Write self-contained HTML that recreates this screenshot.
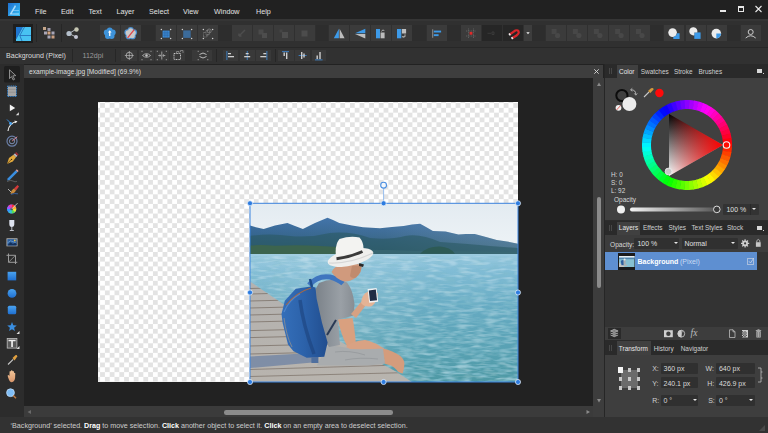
<!DOCTYPE html>
<html><head><meta charset="utf-8">
<style>
*{margin:0;padding:0;box-sizing:border-box}
html,body{width:768px;height:433px;overflow:hidden;background:#222;font-family:"Liberation Sans",sans-serif;color:#ddd}
.a{position:absolute}
.t{position:absolute;white-space:nowrap;font-size:7px;line-height:9px}
.btn{position:absolute;top:25px;height:16px;width:20px;background:#3b3b3b}
.cb{position:absolute;top:50px;height:11px;width:16px;background:#3a3a3a}
.tool{position:absolute;left:4px;width:16px;height:16px}
svg{position:absolute;overflow:visible}
</style></head><body>
<!-- menu bar -->
<div class="a" style="left:0;top:0;width:768px;height:19px;background:#212121"></div>
<!-- toolbar -->
<div class="a" style="left:0;top:19px;width:768px;height:28px;background:#303030;border-top:2px solid #353535"></div>
<!-- context bar -->
<div class="a" style="left:0;top:47px;width:768px;height:17px;background:#313131;border-top:1px solid #272727"></div>
<!-- left tools -->
<div class="a" style="left:0;top:64px;width:24px;height:353px;background:#2c2c2c"></div>
<!-- doc tab -->
<div class="a" style="left:24px;top:65px;width:579px;height:13px;background:#3e3e3e"></div>
<!-- canvas -->
<div class="a" style="left:24px;top:78px;width:569px;height:328px;background:#222"></div>

<!-- document -->
<div class="a" style="left:98px;top:101.5px;width:420px;height:280.5px;background-color:#fff;background-image:conic-gradient(#fff 25%,#e3e3e3 0 50%,#fff 0 75%,#e3e3e3 0);background-size:9.61px 9.61px;background-position:2.1px 1.05px"></div>
<svg style="left:250px;top:203px" width="268" height="179" viewBox="250 203 268 179">
<defs>
<linearGradient id="sky" x1="0" y1="203" x2="0" y2="250" gradientUnits="userSpaceOnUse"><stop offset="0" stop-color="#e3ebf1"/><stop offset="1" stop-color="#eef3f6"/></linearGradient>
<linearGradient id="mtn" x1="0" y1="217" x2="0" y2="254" gradientUnits="userSpaceOnUse"><stop offset="0" stop-color="#3f72a9"/><stop offset="0.4" stop-color="#386894"/><stop offset="1" stop-color="#2c5a6e"/></linearGradient>
<linearGradient id="mtn2" x1="250" y1="0" x2="518" y2="0" gradientUnits="userSpaceOnUse"><stop offset="0" stop-color="#fff" stop-opacity="0"/><stop offset="0.5" stop-color="#fff" stop-opacity="0.04"/><stop offset="1" stop-color="#c8ddf0" stop-opacity="0.22"/></linearGradient>
<linearGradient id="water" x1="0" y1="254" x2="0" y2="382" gradientUnits="userSpaceOnUse"><stop offset="0" stop-color="#9ccbe0"/><stop offset="0.12" stop-color="#82bdd6"/><stop offset="0.4" stop-color="#67abc3"/><stop offset="0.75" stop-color="#58a1b3"/><stop offset="1" stop-color="#4e99a4"/></linearGradient>
<radialGradient id="glare" cx="330" cy="300" r="110" gradientUnits="userSpaceOnUse"><stop offset="0" stop-color="#fff" stop-opacity="0.15"/><stop offset="1" stop-color="#fff" stop-opacity="0"/></radialGradient>
<linearGradient id="dock" x1="0" y1="281" x2="0" y2="382" gradientUnits="userSpaceOnUse"><stop offset="0" stop-color="#b4b2b0"/><stop offset="1" stop-color="#b8b4ae"/></linearGradient>
<linearGradient id="pack" x1="280" y1="0" x2="328" y2="0" gradientUnits="userSpaceOnUse"><stop offset="0" stop-color="#3570bb"/><stop offset="0.5" stop-color="#2c62aa"/><stop offset="1" stop-color="#214d8e"/></linearGradient>
<linearGradient id="shirt" x1="318" y1="0" x2="356" y2="0" gradientUnits="userSpaceOnUse"><stop offset="0" stop-color="#7e858c"/><stop offset="0.6" stop-color="#9aa0a6"/><stop offset="1" stop-color="#858b91"/></linearGradient>
<linearGradient id="skin2" x1="0" y1="0" x2="1" y2="0"><stop offset="0" stop-color="#c98a68"/><stop offset="1" stop-color="#e2b296"/></linearGradient>
</defs>
<rect x="250" y="203" width="268" height="179" fill="url(#sky)"/>
<polygon points="250,225.5 257,227.5 263.7,229.1 275,225.5 287.4,223.1 295,226 302.9,229.1 315,223 327.5,217.7 333,220 339.3,223.1 352,225.5 363,227.3 380,228.2 392,227 403.7,226 412,224.5 420.1,223.7 426,227 432.9,231 445.6,231.5 458.4,234.6 466,234 474.8,234 486,237 496.7,240 507,241.5 518,243.7 518,255 250,255" fill="url(#mtn)"/>
<polygon points="250,225.5 257,227.5 263.7,229.1 275,225.5 287.4,223.1 295,226 302.9,229.1 315,223 327.5,217.7 333,220 339.3,223.1 352,225.5 363,227.3 380,228.2 392,227 403.7,226 412,224.5 420.1,223.7 426,227 432.9,231 445.6,231.5 458.4,234.6 466,234 474.8,234 486,237 496.7,240 507,241.5 518,243.7 518,255 250,255" fill="url(#mtn2)"/>
<path d="M250 236 Q270 233 290 236 Q310 238 330 233 Q350 231 370 238 Q390 240 405 236 Q420 233 440 242 Q470 244 490 246 L518 248 V255 H250 Z" fill="#2a5862" opacity="0.6"/>
<path d="M250 245.5 Q262 244.5 275 245.8 Q300 244.8 320 246 L338 247 L340 254 H250 Z" fill="#3c644e"/>
<path d="M338 249.5 Q380 249 420 251 Q470 251 518 251.5 V254 H338 Z" fill="#3a6873" opacity="0.8"/>
<path d="M420 253.7 Q428 246 440 246.5 Q450 247 455 253.7 Z" fill="#2d5a55"/>
<filter id="wv" x="0" y="0" width="1" height="1"><feTurbulence type="fractalNoise" baseFrequency="0.07 0.32" numOctaves="2" seed="3"/><feColorMatrix values="0 0 0 0 0.22  0 0 0 0 0.5  0 0 0 0 0.6  0 0 0 3.6 -1.55"/></filter>
<filter id="wv2" x="0" y="0" width="1" height="1"><feTurbulence type="fractalNoise" baseFrequency="0.07 0.32" numOctaves="2" seed="9"/><feColorMatrix values="0 0 0 0 0.9  0 0 0 0 0.96  0 0 0 0 1  0 0 0 -3.2 1.75"/></filter>
<rect x="250" y="254" width="268" height="128" fill="url(#water)"/>
<rect x="250" y="254" width="268" height="128" fill="url(#glare)"/>
<linearGradient id="wmg" x1="0" y1="254" x2="0" y2="382" gradientUnits="userSpaceOnUse"><stop offset="0" stop-color="#fff" stop-opacity="0.35"/><stop offset="0.5" stop-color="#fff" stop-opacity="0.8"/><stop offset="1" stop-color="#fff" stop-opacity="1"/></linearGradient><mask id="wm"><rect x="250" y="254" width="268" height="128" fill="url(#wmg)"/></mask><rect x="250" y="256" width="268" height="126" filter="url(#wv)" opacity="0.85" mask="url(#wm)"/><rect x="250" y="256" width="268" height="126" filter="url(#wv2)" opacity="0.28"/>
<polygon points="250,281.5 281.7,303 330,336 395,371 412,382 250,382" fill="url(#dock)"/>
<clipPath id="dockclip"><polygon points="250,281.5 281.7,303 330,336 395,371 412,382 250,382"/></clipPath><g clip-path="url(#dockclip)"><path d="M250 288.5 L330 286.5 M250 294.0 L330 292.0 M250 301.0 L330 299.0 M250 308.0 L330 306.0 M250 315.0 L330 313.0 M250 322.0 L330 320.0 M250 330.6 L330 328.6 M250 337.6 L330 335.6 M250 346.0 L330 344.0 M250 354.0 L330 352.0 " stroke="#7a6f66" stroke-width="1" opacity="0.75"/><path d="M250 369.5 L400 365 M250 376.5 L410 372.5" stroke="#7a6f66" stroke-width="1" opacity="0.7"/></g>
<polygon points="250,356.5 312,353 318,362 250,368" fill="#7587a4" opacity="0.85"/>
<!-- shorts -->
<polygon points="329,345 347,347.8 384,347.8 385,363.7 368,365.5 316.7,365.5 322,356" fill="#a9acae"/>
<path d="M335 352 Q350 350 365 355 M345 360 Q360 357 378 359" stroke="#8c9093" stroke-width="0.8" fill="none" opacity="0.7"/>
<!-- leg -->
<path d="M383 348.6 Q393 351 400 355.7 Q405 360 404.4 364.6 Q404 370 402.6 373.4 Q400 373 398.2 371.7 Q394 367 391 365.5 L385 363.7 Z" fill="#d49c7c"/>
<!-- shirt -->
<path d="M314 292 L319 283 Q333 277 347 282.5 Q353 290 354.5 304 L353.4 315.4 L338 319.7 L340 345 L329 347 L321 335 L316 305 Z" fill="url(#shirt)"/>
<!-- strap dark -->
<path d="M336 320 L327 335" stroke="#2a3a55" stroke-width="2" />
<!-- upper arm -->
<path d="M338 319.5 L352.5 318 Q355 330 356 346 Q351 349 347 346 Q341 335 338 319.5 Z" fill="#d9a07f"/>
<!-- forearm on thigh -->
<path d="M346 347 Q352 341 365 340 Q374 342 379 345.5 L384 348.5 Q366 349.5 350 349 Z" fill="#d9a283"/>
<!-- phone arm -->
<path d="M351 314 L361 302 L366 305 L356 318 Z" fill="#d6a183"/>
<path d="M361 303 Q362 294 368 291.5 L378 293 Q377 302 372 306 Q365 308 361 303 Z" fill="#e4b395"/>
<polygon points="367.6,289 376.6,288 378.2,301.8 369.2,302.8" fill="#f1f3f5"/>
<polygon points="368.8,290.5 375.8,289.6 377,300.2 370,301.1" fill="#1f2c44"/>
<!-- backpack -->
<path d="M311 286.5 L315.5 287.5 L316.6 298.5 L322 322.7 L327.6 342.4 L324.3 356.7 L306.7 357.8 L293.5 351.2 L288 344.6 L282.6 322.7 L281.5 313.9 L284.8 300.7 L295.75 288.65 Z" fill="url(#pack)"/>
<path d="M309 285 Q318 275 330 277 Q338 279 343 283.5" stroke="#3f75bf" stroke-width="5" fill="none"/>
<path d="M310 279 L312 287" stroke="#1d4a88" stroke-width="2.5"/>
<path d="M286 305 Q297 292 311 288" stroke="#a46848" stroke-width="1.1" fill="none"/>
<path d="M284 318 Q286 335 292 347" stroke="#8f8f8f" stroke-width="0.8" fill="none"/>
<path d="M300 300 Q303 325 314 354" stroke="#1b3f78" stroke-width="3.5" fill="none" opacity="0.55"/>
<path d="M284 312 Q289 300 300 294" stroke="#6c9fe0" stroke-width="1.2" fill="none" opacity="0.5"/>
<rect x="311.4" y="357" width="7" height="6" fill="#4f6f9e"/>
<!-- neck/head -->
<path d="M331.5 272 Q335 265 345 263 L361.5 264.5 Q362.5 272 356 277.5 Q350 282 344 281.5 Q336 279 331.5 272 Z" fill="#d09a7d"/><path d="M352 266 Q361 265 361.5 267 Q361 273 356 277.5 Q352 279 350 276 Z" fill="#b98468" opacity="0.7"/>
<path d="M359 263 L364 264.5 L363 267 L359 266 Z" fill="#2a2a2a"/>
<!-- hat -->
<ellipse cx="350.5" cy="257.5" rx="23.3" ry="8" transform="rotate(-13 350.5 257.5)" fill="#efefed"/>
<path d="M336 256.5 Q334.5 245 339.5 239 Q350 235.5 359.5 237.5 Q364.5 243 363.3 251.5 Z" fill="#f3f3f1"/>
<path d="M336.5 258.8 Q350 257 362.5 251.5" stroke="#3a3a3a" stroke-width="3" fill="none"/>
<path d="M329 263 Q350 264 373 253" stroke="#d0d0d0" stroke-width="1.1" fill="none" opacity="0.8"/>
</svg>
<!-- selection -->
<svg style="left:0;top:0" width="768" height="433" viewBox="0 0 768 433">
<rect x="250" y="203.3" width="268" height="178.7" fill="none" stroke="#3b83de" stroke-width="1"/>
<path d="M383.6 188.5 V203" stroke="#7fb0ec" stroke-width="0.8"/>
<circle cx="383.6" cy="185.2" r="2.9" fill="#f2f6fb" stroke="#4a8ee0" stroke-width="1.1"/>
<circle cx="250.0" cy="203.3" r="2.55" fill="#2d7ce0" stroke="#f2f6fb" stroke-width="0.7"/>
<circle cx="383.6" cy="203.3" r="2.55" fill="#2d7ce0" stroke="#f2f6fb" stroke-width="0.7"/>
<circle cx="518.0" cy="203.3" r="2.55" fill="#2d7ce0" stroke="#f2f6fb" stroke-width="0.7"/>
<circle cx="250.0" cy="292.5" r="2.55" fill="#2d7ce0" stroke="#f2f6fb" stroke-width="0.7"/>
<circle cx="518.0" cy="292.5" r="2.55" fill="#2d7ce0" stroke="#f2f6fb" stroke-width="0.7"/>
<circle cx="250.0" cy="382.0" r="2.55" fill="#2d7ce0" stroke="#f2f6fb" stroke-width="0.7"/>
<circle cx="383.6" cy="382.0" r="2.55" fill="#2d7ce0" stroke="#f2f6fb" stroke-width="0.7"/>
<circle cx="518.0" cy="382.0" r="2.55" fill="#2d7ce0" stroke="#f2f6fb" stroke-width="0.7"/>
</svg>
<!-- v scrollbar -->
<div class="a" style="left:593px;top:78px;width:11.5px;height:339px;background:#3d3d3d"></div>
<!-- h scrollbar -->
<div class="a" style="left:24px;top:406px;width:569px;height:11px;background:#3b3b3b"></div>
<!-- separator -->
<div class="a" style="left:604px;top:64px;width:1px;height:353px;background:#262626"></div>

<!-- right panel -->
<div class="a" style="left:605px;top:64px;width:163px;height:353px;background:#404040"></div>
<!-- status bar -->
<div class="a" style="left:0;top:417px;width:768px;height:16px;background:#323232"></div>

<!-- menu -->
<svg style="left:8px;top:3px" width="12" height="13" viewBox="0 0 12 13">
<defs><linearGradient id="lg1" x1="0" y1="0" x2="1" y2="1"><stop offset="0" stop-color="#1f6fd0"/><stop offset="1" stop-color="#35c0f5"/></linearGradient></defs>
<rect width="12" height="13" fill="url(#lg1)"/>
<path d="M1.5 11.5 L7 2 L8 3.5 L3.8 10.5 L11 10.5 L11 11.5 Z" fill="#bfe8ff" opacity="0.85"/>
<path d="M4 7.5 L11 7.5" stroke="#9bd8ff" stroke-width="0.6"/>
</svg>
<div class="t" style="left:35px;top:7px;font-size:7.2px;color:#e3e3e3">File</div>
<div class="t" style="left:61px;top:7px;font-size:7.2px;color:#e3e3e3">Edit</div>
<div class="t" style="left:88.5px;top:7px;font-size:7.2px;color:#e3e3e3">Text</div>
<div class="t" style="left:116.5px;top:7px;font-size:7.2px;color:#e3e3e3">Layer</div>
<div class="t" style="left:149px;top:7px;font-size:7.2px;color:#e3e3e3">Select</div>
<div class="t" style="left:183px;top:7px;font-size:7.2px;color:#e3e3e3">View</div>
<div class="t" style="left:214px;top:7px;font-size:7.2px;color:#e3e3e3">Window</div>
<div class="t" style="left:256px;top:7px;font-size:7.2px;color:#e3e3e3">Help</div>
<div class="a" style="left:720px;top:10px;width:6px;height:1.5px;background:#e8e8e8"></div>
<div class="a" style="left:738px;top:6px;width:6px;height:6px;border:1px solid #e8e8e8;border-top-width:2px"></div>
<svg style="left:755px;top:6px" width="7" height="6" viewBox="0 0 7 6"><path d="M0.5 0 L6.5 6 M6.5 0 L0.5 6" stroke="#e8e8e8" stroke-width="1.1"/></svg>

<!-- toolbar -->
<div class="a" style="left:13px;top:24px;width:20px;height:18.5px;background:#1e1e1e"></div>
<svg style="left:15.5px;top:26.5px" width="15" height="14" viewBox="0 0 15 14">
<rect width="15" height="14" fill="#48c3f2"/>
<path d="M0 0 H6.5 L0 12 Z" fill="#1f76d0"/>
<path d="M6.5 0 L0 12 M8.5 0 L3.8 8.5 L6 14 M3.8 8.5 H15" stroke="#1e5fb0" stroke-width="0.7" fill="none"/>
</svg>
<div class="a" style="left:36px;top:24px;width:1px;height:18px;background:#262626"></div>
<svg style="left:43px;top:27px" width="12" height="12" viewBox="0 0 12 12">
<rect x="0" y="0" width="3" height="3" fill="#c4a589"/><rect x="4.5" y="1" width="3" height="3" fill="#9d9aab"/>
<rect x="1" y="4.5" width="3" height="3" fill="#a9a7b8"/><rect x="4.5" y="4.5" width="3" height="3" fill="#d2a27e"/><rect x="8.5" y="4.5" width="3" height="3" fill="#a8a6b7"/>
<rect x="4.5" y="8.5" width="3" height="3" fill="#a9a7b8"/><rect x="8.5" y="8.5" width="3" height="3" fill="#c99f82"/>
</svg>
<div class="a" style="left:61px;top:24px;width:1px;height:18px;background:#262626"></div>
<svg style="left:66px;top:27px" width="14" height="13" viewBox="0 0 14 13">
<path d="M3 6.5 L10.5 2 M3 6.5 L10 10" stroke="#b9bdc2" stroke-width="1"/>
<circle cx="3" cy="6.5" r="2.6" fill="#b4bfcb"/><circle cx="10.5" cy="2.5" r="2.2" fill="#c5c6b2"/><circle cx="10" cy="10" r="2" fill="#c2c4d2"/>
</svg>
<div class="a" style="left:141.45px;top:25px;width:13.60px;height:16px;background:#2d2d2d"></div>
<div class="a" style="left:218.30px;top:25px;width:13.25px;height:16px;background:#2d2d2d"></div>
<div class="a" style="left:315.60px;top:25px;width:12.70px;height:16px;background:#2d2d2d"></div>
<div class="a" style="left:412.45px;top:25px;width:13.95px;height:16px;background:#2d2d2d"></div>
<div class="a" style="left:447.45px;top:25px;width:13.10px;height:16px;background:#2d2d2d"></div>
<div class="a" style="left:532.20px;top:25px;width:12.70px;height:16px;background:#2d2d2d"></div>
<div class="a" style="left:650.45px;top:25px;width:12.95px;height:16px;background:#2d2d2d"></div>
<div class="a" style="left:727.10px;top:25px;width:12.95px;height:16px;background:#2d2d2d"></div>
<div class="btn" style="left:99.75px"></div>
<div class="btn" style="left:120.75px"></div>
<div class="btn" style="left:155.75px"></div>
<div class="btn" style="left:177.00px"></div>
<div class="btn" style="left:198.00px"></div>
<div class="btn" style="left:232.25px"></div>
<div class="btn" style="left:253.25px"></div>
<div class="btn" style="left:274.25px"></div>
<div class="btn" style="left:295.25px"></div>
<div class="btn" style="left:329.00px"></div>
<div class="btn" style="left:350.25px"></div>
<div class="btn" style="left:371.10px"></div>
<div class="btn" style="left:392.10px"></div>
<div class="btn" style="left:427.10px"></div>
<div class="btn" style="left:461.25px"></div>
<div class="btn" style="left:545.60px"></div>
<div class="btn" style="left:566.90px"></div>
<div class="btn" style="left:587.90px"></div>
<div class="btn" style="left:609.10px"></div>
<div class="btn" style="left:630.00px"></div>
<div class="btn" style="left:664.10px"></div>
<div class="btn" style="left:686.00px"></div>
<div class="btn" style="left:707.00px"></div>
<div class="btn" style="left:740.75px"></div>
<div class="btn" style="left:482.25px;background:#262626"></div>
<div class="btn" style="left:503.1px;background:#262626"></div>
<div class="btn" style="left:524px;width:7.5px;background:#3d3d3d"></div>
<svg style="left:0;top:0" width="768" height="64" viewBox="0 0 768 64"><circle cx="109.75" cy="30.31" r="2.90" fill="#3e93da"/><circle cx="112.78" cy="32.51" r="2.90" fill="#3e93da"/><circle cx="111.63" cy="36.08" r="2.90" fill="#3e93da"/><circle cx="107.87" cy="36.08" r="2.90" fill="#3e93da"/><circle cx="106.72" cy="32.51" r="2.90" fill="#3e93da"/><circle cx="109.75" cy="33.50" r="3.48" fill="#3e93da"/><path d="M109.75 30.2 L111.6 32.6 H110.4 V36 H109.1 V32.6 H107.9 Z" fill="#ffffff"/><circle cx="130.70" cy="30.09" r="3.10" fill="#4a8fd0"/><circle cx="133.94" cy="32.45" r="3.10" fill="#4a8fd0"/><circle cx="132.70" cy="36.26" r="3.10" fill="#4a8fd0"/><circle cx="128.70" cy="36.26" r="3.10" fill="#4a8fd0"/><circle cx="127.46" cy="32.45" r="3.10" fill="#4a8fd0"/><circle cx="130.70" cy="33.50" r="3.72" fill="#4a8fd0"/><circle cx="130.70" cy="30.75" r="2.50" fill="#c9c9c9"/><circle cx="133.32" cy="32.65" r="2.50" fill="#c9c9c9"/><circle cx="132.32" cy="35.72" r="2.50" fill="#c9c9c9"/><circle cx="129.08" cy="35.72" r="2.50" fill="#c9c9c9"/><circle cx="128.08" cy="32.65" r="2.50" fill="#c9c9c9"/><circle cx="130.70" cy="33.50" r="3.00" fill="#c9c9c9"/><path d="M127.6 37.8 L134.2 29.6" stroke="#e0454a" stroke-width="1.3"/><circle cx="161.40" cy="29.40" r="0.75" fill="#d0d0d0"/><circle cx="161.40" cy="38.60" r="0.75" fill="#d0d0d0"/><circle cx="170.60" cy="29.40" r="0.75" fill="#d0d0d0"/><circle cx="170.60" cy="38.60" r="0.75" fill="#d0d0d0"/><circle cx="182.40" cy="29.40" r="0.75" fill="#d0d0d0"/><circle cx="182.40" cy="38.60" r="0.75" fill="#d0d0d0"/><circle cx="191.60" cy="29.40" r="0.75" fill="#d0d0d0"/><circle cx="191.60" cy="38.60" r="0.75" fill="#d0d0d0"/><circle cx="203.40" cy="29.40" r="0.75" fill="#d0d0d0"/><circle cx="203.40" cy="38.60" r="0.75" fill="#d0d0d0"/><circle cx="212.60" cy="29.40" r="0.75" fill="#d0d0d0"/><circle cx="212.60" cy="38.60" r="0.75" fill="#d0d0d0"/><rect x="162.6" y="30.6" width="7" height="7" fill="#3b8ad6"/><path d="M164.9 30.6 V37.6 M167.2 30.6 V37.6 M162.6 32.9 H169.6 M162.6 35.2 H169.6" stroke="#2a5f95" stroke-width="0.5"/><rect x="183.2" y="30.4" width="7.5" height="7.5" fill="#3c6b9a"/><path d="M203.5 37 V32.5 H206 V30.5 H209.5 V34.5 H207 V37 Z M206 32.5 V35 H209" stroke="#9a9a9a" stroke-width="0.6" fill="none" stroke-dasharray="0.8 0.5"/><circle cx="209.2" cy="31" r="2" stroke="#9a9a9a" stroke-width="0.6" fill="none"/><path d="M239 36 L245 30 M239 36 h2.5 M239 36 v-2.5" stroke="#4d4d4d" stroke-width="1.5"/><rect x="258.5" y="29.5" width="5" height="5" fill="#4a4a4a"/><rect x="262" y="33" width="5" height="5" fill="#4d4d4d"/><rect x="279.5" y="29.5" width="3" height="3" fill="#454545"/><rect x="282" y="32" width="6" height="6" fill="#4d4d4d"/><rect x="301.5" y="30.5" width="6" height="6" fill="#4c4c4c"/><path d="M338.9 28.8 V38.3 H333.8 Z" fill="#3d9ae8"/><path d="M339.6 28.8 V38.3 H344.6 Z" fill="#bdbdbd"/><path d="M365.3 28.8 V33.3 H355 Z" fill="#3d9ae8"/><path d="M365.3 34 V38.5 L355 34 Z" fill="#bdbdbd"/><rect x="376" y="29" width="4" height="9.3" fill="#3d9ae8"/><rect x="380.6" y="32.5" width="4" height="5.8" fill="#bdbdbd"/><path d="M381.5 31.5 Q382.5 29 384.3 30.5" stroke="#e0e0e0" stroke-width="0.7" fill="none"/><rect x="397" y="29" width="4.3" height="9.3" fill="#3d9ae8"/><rect x="401.9" y="29" width="4.2" height="4.5" fill="#bdbdbd"/><path d="M405 34.3 V36.8 H402.5 M403.3 36 L402.5 36.8 L403.3 37.6" stroke="#e0e0e0" stroke-width="0.7" fill="none"/><rect x="432.3" y="29.3" width="0.9" height="8.5" fill="#9a9a9a"/><rect x="433.8" y="30.6" width="7.3" height="1.9" fill="#3d9ae8"/><rect x="433.8" y="34.2" width="4.8" height="1.9" fill="#3d9ae8"/><path d="M468.5 28.5 V38.5 M473.5 28.5 V38.5 M466 31 H476 M466 36 H476" stroke="#777" stroke-width="0.6" stroke-dasharray="1 0.7"/><rect x="469.6" y="31.9" width="2.8" height="2.8" fill="#e02a2a"/><path d="M487.5 33.3 H491 M492 32 h2 v2.5 h-2 z" stroke="#3f3f3f" stroke-width="0.8" fill="none"/><path d="M509.5 34.6 L515.3 30.5 Q518.5 29.5 518.8 32.5 Q518.5 34 516.5 35.5 L512 38.3" stroke="#d8262b" stroke-width="2.2" fill="none"/><path d="M509 34.9 L510.3 34" stroke="#f0f0f0" stroke-width="2.2"/><path d="M511.5 38.6 L512.8 37.7" stroke="#f0f0f0" stroke-width="2.2"/><path d="M526.3 32.2 H529.7 L528 34.2 Z" fill="#f0f0f0"/><rect x="551.6" y="29" width="5" height="5" fill="#474747"/><circle cx="557.6" cy="35.5" r="2.6" fill="#484848"/><rect x="572.9" y="29" width="5" height="5" fill="#474747"/><circle cx="578.9" cy="35.5" r="2.6" fill="#484848"/><rect x="593.9" y="29" width="5" height="5" fill="#474747"/><circle cx="599.9" cy="35.5" r="2.6" fill="#484848"/><rect x="615.1" y="29" width="5" height="5" fill="#474747"/><circle cx="621.1" cy="35.5" r="2.6" fill="#484848"/><rect x="636.0" y="29" width="5" height="5" fill="#474747"/><circle cx="642.0" cy="35.5" r="2.6" fill="#484848"/><circle cx="672.6" cy="32.6" r="4.3" fill="#ececec"/><path d="M673.3 38.9 H679.6 V33.2 H676.9 A4.3 4.3 0 0 1 673.3 36.9 Z" fill="#3d9ae8"/><rect x="694.3" y="32.4" width="6.3" height="6.5" fill="#3d9ae8"/><path d="M694.3 35.3 V32.4 H697.3 A4.1 4.1 0 1 0 694.3 35.3 Z" fill="#ececec"/><circle cx="716.3" cy="33.6" r="4.8" fill="#ececec"/><path d="M716.3 33.6 H721.1 A4.8 4.8 0 0 1 716.3 38.4 Z" fill="#3d9ae8"/><circle cx="750.7" cy="32" r="2.5" stroke="#d8d8d8" stroke-width="0.9" fill="none"/><path d="M745.7 38 Q750.7 33.5 755.7 38" stroke="#d8d8d8" stroke-width="0.9" fill="none"/></svg>

<!-- context bar -->
<div class="t" style="left:6px;top:52.2px;font-size:7.1px;color:#dcdcdc">Background (Pixel)</div>
<div class="a" style="left:72px;top:49px;width:1px;height:13px;background:#262626"></div>
<div class="t" style="left:82.5px;top:52.2px;font-size:7.1px;color:#9a9a9a">112dpi</div>
<div class="a" style="left:114.5px;top:49px;width:1px;height:13px;background:#262626"></div>
<div class="a" style="left:121.20px;top:50px;width:16.30px;height:11px;background:#393939"></div>
<div class="a" style="left:139.20px;top:50px;width:14.55px;height:11px;background:#393939"></div>
<div class="a" style="left:155.00px;top:50px;width:13.70px;height:11px;background:#393939"></div>
<div class="a" style="left:170.00px;top:50px;width:15.00px;height:11px;background:#393939"></div>
<div class="a" style="left:191.50px;top:50px;width:20.90px;height:11px;background:#393939"></div>
<div class="a" style="left:222.70px;top:50px;width:15.55px;height:11px;background:#393939"></div>
<div class="a" style="left:239.75px;top:50px;width:14.85px;height:11px;background:#393939"></div>
<div class="a" style="left:255.75px;top:50px;width:15.45px;height:11px;background:#393939"></div>
<div class="a" style="left:278.30px;top:50px;width:15.60px;height:11px;background:#393939"></div>
<div class="a" style="left:295.40px;top:50px;width:14.80px;height:11px;background:#393939"></div>
<div class="a" style="left:311.70px;top:50px;width:14.10px;height:11px;background:#393939"></div>
<div class="a" style="left:215.5px;top:49px;width:1px;height:13px;background:#262626"></div>
<div class="a" style="left:274.5px;top:49px;width:1px;height:13px;background:#262626"></div>
<svg style="left:0;top:0" width="768" height="64" viewBox="0 0 768 64"><circle cx="129.3" cy="55.5" r="3.2" stroke="#c8c8c8" stroke-width="0.7" fill="none"/><path d="M129.3 51 V60 M124.8 55.5 H133.8" stroke="#c8c8c8" stroke-width="0.6"/><path d="M142.5 55.5 Q146.5 51.8 150.5 55.5 Q146.5 59.2 142.5 55.5 Z" stroke="#c8c8c8" stroke-width="0.7" fill="none"/><circle cx="146.5" cy="55.5" r="1.2" fill="#c8c8c8"/><rect x="141.50" y="50.80" width="1" height="1" fill="#aaa"/><rect x="141.50" y="59.20" width="1" height="1" fill="#aaa"/><rect x="150.50" y="50.80" width="1" height="1" fill="#aaa"/><rect x="150.50" y="59.20" width="1" height="1" fill="#aaa"/><rect x="156.80" y="50.80" width="1" height="1" fill="#aaa"/><rect x="156.80" y="59.20" width="1" height="1" fill="#aaa"/><rect x="165.80" y="50.80" width="1" height="1" fill="#aaa"/><rect x="165.80" y="59.20" width="1" height="1" fill="#aaa"/><rect x="197.70" y="50.80" width="1" height="1" fill="#aaa"/><rect x="197.70" y="59.20" width="1" height="1" fill="#aaa"/><rect x="207.30" y="50.80" width="1" height="1" fill="#aaa"/><rect x="207.30" y="59.20" width="1" height="1" fill="#aaa"/><path d="M161.8 51.5 V59.5" stroke="#c8c8c8" stroke-width="0.7"/><path d="M158.3 55.5 H160.5 M163.1 55.5 H165.3" stroke="#c8c8c8" stroke-width="0.7"/><path d="M159.5 54.2 L160.9 55.5 L159.5 56.8 M164.1 54.2 L162.7 55.5 L164.1 56.8" stroke="#c8c8c8" stroke-width="0.6" fill="none"/><path d="M174 53.5 V59.5 H180.5 V53.5 Z" stroke="#d0d0d0" stroke-width="0.9" fill="none" stroke-dasharray="1 0.6"/><path d="M176.5 53.5 V51.5 H179 V53.5 M180.5 52 V50.5 H183 V53" stroke="#aaa" stroke-width="0.6" fill="none"/><path d="M199.5 54.5 Q203 51.5 206.5 54.5 M199.5 56.5 Q203 59.5 206.5 56.5" stroke="#c8c8c8" stroke-width="0.9" fill="none"/><rect x="226.5" y="51" width="0.8" height="9" fill="#3d8ee0"/><rect x="228" y="53" width="3" height="1.3" fill="#cfcfcf"/><rect x="228" y="56" width="6" height="1.3" fill="#cfcfcf"/><rect x="246.8" y="51" width="0.8" height="9" fill="#3d8ee0"/><rect x="245.7" y="53" width="3" height="1.3" fill="#cfcfcf"/><rect x="244.2" y="56" width="6" height="1.3" fill="#cfcfcf"/><rect x="266.5" y="51" width="0.8" height="9" fill="#3d8ee0"/><rect x="263.3" y="53" width="3" height="1.3" fill="#cfcfcf"/><rect x="260.3" y="56" width="6" height="1.3" fill="#cfcfcf"/><rect x="282" y="51.3" width="7" height="0.8" fill="#3d8ee0"/><rect x="283.5" y="52.5" width="1.4" height="3.5" fill="#cfcfcf"/><rect x="286" y="52.5" width="1.4" height="6.5" fill="#cfcfcf"/><rect x="298.6" y="55.2" width="8" height="0.8" fill="#3d8ee0"/><rect x="301" y="52" width="1.4" height="7" fill="#cfcfcf"/><rect x="303.3" y="53.5" width="1.4" height="4" fill="#cfcfcf"/><rect x="315" y="59.5" width="7.5" height="0.8" fill="#3d8ee0"/><rect x="316.5" y="55.5" width="1.4" height="3.6" fill="#cfcfcf"/><rect x="319.3" y="52" width="1.4" height="7.1" fill="#cfcfcf"/></svg><div class="t" style="left:29px;top:67.3px;font-size:6.65px;color:#dedede">example-image.jpg [Modified] (69.9%)</div>
<svg style="left:594px;top:69.2px" width="5" height="5" viewBox="0 0 5 5"><path d="M0.3 0.3 L4.7 4.7 M4.7 0.3 L0.3 4.7" stroke="#dcdcdc" stroke-width="0.9"/></svg>

<svg style="left:0;top:64px" width="24" height="353" viewBox="0 64 24 353"><defs><linearGradient id="bl" x1="0" y1="0" x2="0" y2="1"><stop offset="0" stop-color="#4aa3f0"/><stop offset="1" stop-color="#1f6fd0"/></linearGradient><linearGradient id="skin" x1="0" y1="0" x2="0" y2="1"><stop offset="0" stop-color="#f2c79a"/><stop offset="1" stop-color="#d9956a"/></linearGradient></defs><rect x="4" y="66" width="16" height="16.5" rx="1.5" fill="#1e1e1e"/><path d="M9.5 69.8 L15.8 75.6 L12.8 75.9 L14.6 79.3 L13.2 80 L11.5 76.6 L9.5 78.6 Z" stroke="#a8a8a8" stroke-width="0.8" fill="#2a2a2a"/><rect x="8" y="86.5" width="8" height="9.5" fill="#a6a6a6"/><path d="M8.3 89.3 H15.7 M8.3 92.2 H15.7" stroke="#8a8a8a" stroke-width="0.7"/><rect x="7.5" y="86" width="9" height="10.5" stroke="#3a8ee0" stroke-width="0.9" fill="none" stroke-dasharray="1.1 0.7"/><path d="M9.8 104.5 L15.2 108 L9.8 111.3 Z" fill="#f2f2f2"/><path d="M18.8 112.3 V115.3 H15.8 Z" fill="#e0e0e0"/><path d="M8 131 Q9 123 17 121.5" stroke="#e8e8e8" stroke-width="1.2" fill="none"/><path d="M14.5 120.5 L17.5 121.5 L15 123.2" fill="#e8e8e8"/><path d="M7 119.5 L12 124.5" stroke="#3a8ee0" stroke-width="1"/><circle cx="10.5" cy="123.5" r="1.4" fill="#4aa3f0"/><circle cx="12" cy="141.2" r="5" stroke="#6b7fa8" stroke-width="1.2" fill="none"/><circle cx="12" cy="141.2" r="2.6" stroke="#7c8fb5" stroke-width="1" fill="none"/><path d="M12.2 141 L17.2 136.8" stroke="#e08a9a" stroke-width="1"/><g transform="translate(0 1.4)"><path d="M7 162.5 L9 156.5 L13.5 153.3 L16 155.8 L12.8 160.2 Z" fill="#e2a93c"/><path d="M7 162.5 L10.8 158.6" stroke="#3a2a10" stroke-width="0.6"/><path d="M13.5 153.3 L15 151.8 L17.5 154.3 L16 155.8 Z" fill="#b8b8c0"/><path d="M15 151.8 L16.2 150.7 L18.6 153.1 L17.5 154.3 Z" fill="#a02a30"/><circle cx="11.5" cy="158" r="0.7" fill="#3a2a10"/></g><path d="M7.8 178.2 L15.8 170.2 L17.6 172 L9.6 180 L7.2 180.6 Z" fill="#3a8ee0"/><path d="M15.8 170.2 L16.8 169.2 L18.6 171 L17.6 172 Z" fill="#e0a0a0"/><path d="M7 181.5 Q11 179.5 13 181 T17 181.3" stroke="#8a8a8a" stroke-width="0.5" fill="none"/><path d="M8 189 L12 193" stroke="#cfcfcf" stroke-width="0.8"/><path d="M10.5 194 Q11 190 14 188.5 L16 190.5 Q14.5 193.5 10.5 194 Z" fill="#c98a3a"/><path d="M14 188.5 L17.5 185 L19 186.5 L16 190.5 Z" fill="#d33a3a"/><path d="M11 194.3 Q14.5 193 18 193.8" stroke="#3a6ab0" stroke-width="0.8" fill="none"/><circle cx="11.7" cy="209" r="4.6" fill="#58d"/><path d="M11.7 209 L11.70 204.40 A4.6 4.6 0 0 1 14.95 205.75 Z" fill="#f33"/><path d="M11.7 209 L14.95 205.75 A4.6 4.6 0 0 1 16.30 209.00 Z" fill="#fa3"/><path d="M11.7 209 L16.30 209.00 A4.6 4.6 0 0 1 14.95 212.25 Z" fill="#ee3"/><path d="M11.7 209 L14.95 212.25 A4.6 4.6 0 0 1 11.70 213.60 Z" fill="#5d5"/><path d="M11.7 209 L11.70 213.60 A4.6 4.6 0 0 1 8.45 212.25 Z" fill="#3cc"/><path d="M11.7 209 L8.45 212.25 A4.6 4.6 0 0 1 7.10 209.00 Z" fill="#39f"/><path d="M11.7 209 L7.10 209.00 A4.6 4.6 0 0 1 8.45 205.75 Z" fill="#a5f"/><path d="M11.7 209 L8.45 205.75 A4.6 4.6 0 0 1 11.70 204.40 Z" fill="#f3a"/><circle cx="11.7" cy="209" r="1.3" fill="#555"/><path d="M11.7 209 L17.5 203.2" stroke="#ddd" stroke-width="0.8"/><path d="M9.3 220 H14.3 V224 Q14.3 227 11.8 227 Q9.3 227 9.3 224 Z" fill="#dde2ee"/><path d="M11.8 227 V230.3 M9.8 230.5 H13.8" stroke="#c8ccd6" stroke-width="0.9"/><rect x="6.5" y="238.3" width="11" height="8" fill="#b8b8b8"/><rect x="7.3" y="239.1" width="9.4" height="6.4" fill="#2f5f9a"/><path d="M7.3 245.5 L10.5 242.3 L13 244 L16.7 241.5 V245.5 Z" fill="#14305a"/><path d="M7.3 243 L10.5 240.8 L16.7 243" stroke="#7fb6ea" stroke-width="0.6" fill="none"/><circle cx="14.8" cy="240.5" r="0.9" fill="#f0c040"/><path d="M8.5 253.5 V262.3 H17.3 M6.5 255.3 H15.5 V264" stroke="#9a9a9a" stroke-width="1" fill="none"/><path d="M8.5 262.3 L15.5 255.3" stroke="#9a9a9a" stroke-width="0.8"/><rect x="7.6" y="271.8" width="8.6" height="8.6" fill="url(#bl)"/><circle cx="12" cy="293.4" r="4.4" fill="url(#bl)"/><rect x="7.8" y="305.8" width="8.4" height="8.4" rx="1.5" fill="url(#bl)"/><polygon points="12.00,322.00 13.29,325.22 16.76,325.45 14.09,327.68 14.94,331.05 12.00,329.20 9.06,331.05 9.91,327.68 7.24,325.45 10.71,325.22" fill="#3a8ee0"/><path d="M19.5 331 V334 H16.5 Z" fill="#e0e0e0"/><rect x="6.8" y="338" width="10.5" height="10.5" fill="#bdbdbd"/><rect x="7.6" y="338.8" width="8.9" height="8.9" fill="#5a5a5a"/><path d="M8.5 339.8 H15.6 V341.3 H12.9 V347 H11.2 V341.3 H8.5 Z" fill="#f0f0f0"/><path d="M19.5 346 V349 H16.5 Z" fill="#e0e0e0"/><path d="M8 364.5 L13.2 359.3" stroke="#c8c8c8" stroke-width="1.1"/><path d="M12.5 358 L15.3 355.3 Q17 354.5 17.3 356.4 L14.5 360.6 Z" fill="#e0a040"/><path d="M8.5 378.5 Q7.5 376 7.8 375 Q8.5 374.5 9.4 376 L9.6 371.5 Q10.2 370.5 10.9 371.5 L11.1 370.6 Q11.7 369.8 12.3 370.6 L12.6 371.2 Q13.3 370.5 13.9 371.6 L14.1 373 Q14.8 372.5 15.3 373.3 L15.1 378 Q14.5 382 11.8 382.2 Q9.5 382 8.5 378.5 Z" fill="url(#skin)"/><circle cx="10.5" cy="392.7" r="3.9" fill="#7fbdf5" stroke="#bfdcf7" stroke-width="0.8"/><path d="M13.3 395.5 L16 398.3" stroke="#c07a40" stroke-width="1.4"/></svg>

<!-- color panel -->
<svg style="left:605px;top:78px" width="163" height="142" viewBox="605 78 163 142">
<defs>
<linearGradient id="triBW" x1="0" y1="114" x2="0" y2="176" gradientUnits="userSpaceOnUse"><stop offset="0" stop-color="#000"/><stop offset="1" stop-color="#fff"/></linearGradient>
<linearGradient id="triR" x1="669" y1="0" x2="723" y2="0" gradientUnits="userSpaceOnUse"><stop offset="0" stop-color="#ff0000" stop-opacity="0"/><stop offset="1" stop-color="#ff0000" stop-opacity="1"/></linearGradient>
<linearGradient id="opac" x1="630" y1="0" x2="714" y2="0" gradientUnits="userSpaceOnUse"><stop offset="0" stop-color="#f4f4f4"/><stop offset="1" stop-color="#f4f4f4" stop-opacity="0.15"/></linearGradient>
<clipPath id="ring"><path d="M687 100 A45 45 0 1 1 686.99 100 Z M687 109 A36 36 0 1 0 687.01 109 Z" clip-rule="evenodd"/></clipPath>
</defs>
<circle cx="621.9" cy="95.5" r="5.6" fill="none" stroke="#0c0c0c" stroke-width="2"/>
<circle cx="629.4" cy="104" r="7" fill="#ececec"/>
<path d="M631.2 89.8 Q635.8 89.8 635.8 94.5" stroke="#cfcfcf" stroke-width="0.8" fill="none"/><path d="M632.3 88.3 L630.5 89.8 L632.3 91.3 M634.3 93.4 L635.8 95.2 L637.3 93.4" stroke="#cfcfcf" stroke-width="0.7" fill="none"/>
<circle cx="618.5" cy="107.8" r="2.9" fill="#f0f0f0"/><path d="M616.5 110 L620.6 105.6" stroke="#e0403a" stroke-width="0.8"/>
<path d="M644 97 L649 92" stroke="#c8c8c8" stroke-width="1.1"/><path d="M648 91 L651 88.3 Q653.5 87.5 653.6 89.5 L650.3 93 Z" fill="#d49a3c"/>
<circle cx="659.4" cy="93" r="4.2" fill="#ff0a0a"/>
<g><path d="M731.94 142.64 A45 45 0 0 1 731.91 147.83 L722.93 147.26 A36 36 0 0 0 722.95 143.12 Z" fill="#ff0c00"/><path d="M731.94 147.36 A45 45 0 0 1 731.37 152.50 L722.50 151.00 A36 36 0 0 0 722.95 146.88 Z" fill="#ff2600"/><path d="M731.45 152.04 A45 45 0 0 1 730.34 157.10 L721.67 154.68 A36 36 0 0 0 722.56 150.63 Z" fill="#ff3f00"/><path d="M730.47 156.65 A45 45 0 0 1 728.84 161.57 L720.47 158.25 A36 36 0 0 0 721.77 154.32 Z" fill="#ff5900"/><path d="M729.01 161.13 A45 45 0 0 1 726.88 165.85 L718.90 161.68 A36 36 0 0 0 720.61 157.90 Z" fill="#ff7200"/><path d="M727.10 165.43 A45 45 0 0 1 724.48 169.90 L716.99 164.92 A36 36 0 0 0 719.08 161.34 Z" fill="#ff8c00"/><path d="M724.74 169.51 A45 45 0 0 1 721.67 173.68 L714.74 167.95 A36 36 0 0 0 717.19 164.61 Z" fill="#ffa500"/><path d="M721.97 173.32 A45 45 0 0 1 718.48 177.15 L712.19 170.72 A36 36 0 0 0 714.98 167.66 Z" fill="#ffbf00"/><path d="M718.82 176.82 A45 45 0 0 1 714.95 180.27 L709.36 173.21 A36 36 0 0 0 712.46 170.46 Z" fill="#ffd800"/><path d="M715.32 179.97 A45 45 0 0 1 711.11 182.99 L706.29 175.40 A36 36 0 0 0 709.66 172.98 Z" fill="#fff200"/><path d="M711.51 182.74 A45 45 0 0 1 707.01 185.31 L703.01 177.25 A36 36 0 0 0 706.61 175.19 Z" fill="#f2ff00"/><path d="M707.43 185.10 A45 45 0 0 1 702.69 187.18 L699.55 178.74 A36 36 0 0 0 703.34 177.08 Z" fill="#d8ff00"/><path d="M703.13 187.01 A45 45 0 0 1 698.19 188.59 L695.95 179.87 A36 36 0 0 0 699.90 178.61 Z" fill="#bfff00"/><path d="M698.65 188.47 A45 45 0 0 1 693.57 189.52 L692.26 180.61 A36 36 0 0 0 696.32 179.77 Z" fill="#a5ff00"/><path d="M694.04 189.45 A45 45 0 0 1 688.88 189.96 L688.51 180.97 A36 36 0 0 0 692.63 180.56 Z" fill="#8cff00"/><path d="M689.36 189.94 A45 45 0 0 1 684.17 189.91 L684.74 180.93 A36 36 0 0 0 688.88 180.95 Z" fill="#72ff00"/><path d="M684.64 189.94 A45 45 0 0 1 679.50 189.37 L681.00 180.50 A36 36 0 0 0 685.12 180.95 Z" fill="#59ff00"/><path d="M679.96 189.45 A45 45 0 0 1 674.90 188.34 L677.32 179.67 A36 36 0 0 0 681.37 180.56 Z" fill="#3fff00"/><path d="M675.35 188.47 A45 45 0 0 1 670.43 186.84 L673.75 178.47 A36 36 0 0 0 677.68 179.77 Z" fill="#26ff00"/><path d="M670.87 187.01 A45 45 0 0 1 666.15 184.88 L670.32 176.90 A36 36 0 0 0 674.10 178.61 Z" fill="#0cff00"/><path d="M666.57 185.10 A45 45 0 0 1 662.10 182.48 L667.08 174.99 A36 36 0 0 0 670.66 177.08 Z" fill="#00ff0c"/><path d="M662.49 182.74 A45 45 0 0 1 658.32 179.67 L664.05 172.74 A36 36 0 0 0 667.39 175.19 Z" fill="#00ff26"/><path d="M658.68 179.97 A45 45 0 0 1 654.85 176.48 L661.28 170.19 A36 36 0 0 0 664.34 172.98 Z" fill="#00ff3f"/><path d="M655.18 176.82 A45 45 0 0 1 651.73 172.95 L658.79 167.36 A36 36 0 0 0 661.54 170.46 Z" fill="#00ff59"/><path d="M652.03 173.32 A45 45 0 0 1 649.01 169.11 L656.60 164.29 A36 36 0 0 0 659.02 167.66 Z" fill="#00ff72"/><path d="M649.26 169.51 A45 45 0 0 1 646.69 165.01 L654.75 161.01 A36 36 0 0 0 656.81 164.61 Z" fill="#00ff8c"/><path d="M646.90 165.43 A45 45 0 0 1 644.82 160.69 L653.26 157.55 A36 36 0 0 0 654.92 161.34 Z" fill="#00ffa5"/><path d="M644.99 161.13 A45 45 0 0 1 643.41 156.19 L652.13 153.95 A36 36 0 0 0 653.39 157.90 Z" fill="#00ffbf"/><path d="M643.53 156.65 A45 45 0 0 1 642.48 151.57 L651.39 150.26 A36 36 0 0 0 652.23 154.32 Z" fill="#00ffd8"/><path d="M642.55 152.04 A45 45 0 0 1 642.04 146.88 L651.03 146.51 A36 36 0 0 0 651.44 150.63 Z" fill="#00fff2"/><path d="M642.06 147.36 A45 45 0 0 1 642.09 142.17 L651.07 142.74 A36 36 0 0 0 651.05 146.88 Z" fill="#00f2ff"/><path d="M642.06 142.64 A45 45 0 0 1 642.63 137.50 L651.50 139.00 A36 36 0 0 0 651.05 143.12 Z" fill="#00d8ff"/><path d="M642.55 137.96 A45 45 0 0 1 643.66 132.90 L652.33 135.32 A36 36 0 0 0 651.44 139.37 Z" fill="#00bfff"/><path d="M643.53 133.35 A45 45 0 0 1 645.16 128.43 L653.53 131.75 A36 36 0 0 0 652.23 135.68 Z" fill="#00a5ff"/><path d="M644.99 128.87 A45 45 0 0 1 647.12 124.15 L655.10 128.32 A36 36 0 0 0 653.39 132.10 Z" fill="#008cff"/><path d="M646.90 124.57 A45 45 0 0 1 649.52 120.10 L657.01 125.08 A36 36 0 0 0 654.92 128.66 Z" fill="#0072ff"/><path d="M649.26 120.49 A45 45 0 0 1 652.33 116.32 L659.26 122.05 A36 36 0 0 0 656.81 125.39 Z" fill="#0059ff"/><path d="M652.03 116.68 A45 45 0 0 1 655.52 112.85 L661.81 119.28 A36 36 0 0 0 659.02 122.34 Z" fill="#003fff"/><path d="M655.18 113.18 A45 45 0 0 1 659.05 109.73 L664.64 116.79 A36 36 0 0 0 661.54 119.54 Z" fill="#0026ff"/><path d="M658.68 110.03 A45 45 0 0 1 662.89 107.01 L667.71 114.60 A36 36 0 0 0 664.34 117.02 Z" fill="#000cff"/><path d="M662.49 107.26 A45 45 0 0 1 666.99 104.69 L670.99 112.75 A36 36 0 0 0 667.39 114.81 Z" fill="#0c00ff"/><path d="M666.57 104.90 A45 45 0 0 1 671.31 102.82 L674.45 111.26 A36 36 0 0 0 670.66 112.92 Z" fill="#2600ff"/><path d="M670.87 102.99 A45 45 0 0 1 675.81 101.41 L678.05 110.13 A36 36 0 0 0 674.10 111.39 Z" fill="#3f00ff"/><path d="M675.35 101.53 A45 45 0 0 1 680.43 100.48 L681.74 109.39 A36 36 0 0 0 677.68 110.23 Z" fill="#5900ff"/><path d="M679.96 100.55 A45 45 0 0 1 685.12 100.04 L685.49 109.03 A36 36 0 0 0 681.37 109.44 Z" fill="#7200ff"/><path d="M684.64 100.06 A45 45 0 0 1 689.83 100.09 L689.26 109.07 A36 36 0 0 0 685.12 109.05 Z" fill="#8c00ff"/><path d="M689.36 100.06 A45 45 0 0 1 694.50 100.63 L693.00 109.50 A36 36 0 0 0 688.88 109.05 Z" fill="#a500ff"/><path d="M694.04 100.55 A45 45 0 0 1 699.10 101.66 L696.68 110.33 A36 36 0 0 0 692.63 109.44 Z" fill="#bf00ff"/><path d="M698.65 101.53 A45 45 0 0 1 703.57 103.16 L700.25 111.53 A36 36 0 0 0 696.32 110.23 Z" fill="#d800ff"/><path d="M703.13 102.99 A45 45 0 0 1 707.85 105.12 L703.68 113.10 A36 36 0 0 0 699.90 111.39 Z" fill="#f200ff"/><path d="M707.43 104.90 A45 45 0 0 1 711.90 107.52 L706.92 115.01 A36 36 0 0 0 703.34 112.92 Z" fill="#ff00f2"/><path d="M711.51 107.26 A45 45 0 0 1 715.68 110.33 L709.95 117.26 A36 36 0 0 0 706.61 114.81 Z" fill="#ff00d8"/><path d="M715.32 110.03 A45 45 0 0 1 719.15 113.52 L712.72 119.81 A36 36 0 0 0 709.66 117.02 Z" fill="#ff00bf"/><path d="M718.82 113.18 A45 45 0 0 1 722.27 117.05 L715.21 122.64 A36 36 0 0 0 712.46 119.54 Z" fill="#ff00a5"/><path d="M721.97 116.68 A45 45 0 0 1 724.99 120.89 L717.40 125.71 A36 36 0 0 0 714.98 122.34 Z" fill="#ff008c"/><path d="M724.74 120.49 A45 45 0 0 1 727.31 124.99 L719.25 128.99 A36 36 0 0 0 717.19 125.39 Z" fill="#ff0072"/><path d="M727.10 124.57 A45 45 0 0 1 729.18 129.31 L720.74 132.45 A36 36 0 0 0 719.08 128.66 Z" fill="#ff0059"/><path d="M729.01 128.87 A45 45 0 0 1 730.59 133.81 L721.87 136.05 A36 36 0 0 0 720.61 132.10 Z" fill="#ff003f"/><path d="M730.47 133.35 A45 45 0 0 1 731.52 138.43 L722.61 139.74 A36 36 0 0 0 721.77 135.68 Z" fill="#ff0026"/><path d="M731.45 137.96 A45 45 0 0 1 731.96 143.12 L722.97 143.49 A36 36 0 0 0 722.56 139.37 Z" fill="#ff000c"/></g>
<polygon points="723,145 669,114 669,176" fill="url(#triBW)"/>
<polygon points="723,145 669,114 669,176" fill="url(#triR)"/>
<circle cx="726.5" cy="145" r="3.3" fill="none" stroke="#f4f4f4" stroke-width="1.1"/>
<circle cx="668.5" cy="171.5" r="3.4" fill="#c8c8c8" stroke="#eeeeee" stroke-width="0.8"/>
<rect x="630" y="207.5" width="84" height="4" rx="2" fill="url(#opac)"/>
<circle cx="621" cy="209.4" r="4" fill="#f0f0f0"/>
<circle cx="716.8" cy="209.4" r="3.3" fill="#3a3a3a" stroke="#eeeeee" stroke-width="0.9"/>
</svg>
<div class="t" style="left:611px;top:169.5px;font-size:6.4px;color:#d8d8d8">H: 0</div>
<div class="t" style="left:611px;top:177.5px;font-size:6.4px;color:#d8d8d8">S: 0</div>
<div class="t" style="left:611px;top:185.5px;font-size:6.4px;color:#d8d8d8">L: 92</div>
<div class="t" style="left:614px;top:195px;font-size:6.5px;color:#d8d8d8">Opacity</div>
<div class="a" style="left:723px;top:203.5px;width:35.5px;height:11px;background:#333333;border-radius:1px"></div>
<div class="a" style="left:750px;top:203.5px;width:0.8px;height:11px;background:#2a2a2a"></div>
<div class="t" style="left:726.5px;top:205px;font-size:6.9px;color:#e0e0e0">100 %</div>
<div class="a" style="left:752.3px;top:208.2px;width:0;height:0;border-left:2px solid transparent;border-right:2px solid transparent;border-top:2px solid #e8e8e8"></div>

<!-- right panel -->
<div class="a" style="left:605px;top:64px;width:163px;height:14px;background:#2a2a2a"></div>
<div class="a" style="left:616.6px;top:65px;width:21.6px;height:13px;background:#404040"></div>
<div class="a" style="left:609px;top:68px;width:0.8px;height:6px;background:#474747"></div>
<div class="a" style="left:611px;top:68px;width:0.8px;height:6px;background:#474747"></div>
<div class="t" style="left:619px;top:67px;font-size:6.45px;color:#e8e8e8">Color</div>
<div class="t" style="left:640.8px;top:67px;font-size:6.45px;color:#d0d0d0">Swatches</div>
<div class="t" style="left:673.9px;top:67px;font-size:6.45px;color:#d0d0d0">Stroke</div>
<div class="t" style="left:698.5px;top:67px;font-size:6.45px;color:#d0d0d0">Brushes</div>
<div class="a" style="left:757.3px;top:69px;width:4.6px;height:4.4px;background:#d8d8d8"></div>
<div class="a" style="left:763.2px;top:72.7px;width:1px;height:1px;background:#d8d8d8"></div>

<div class="a" style="left:605px;top:220px;width:163px;height:1px;background:#2c2c2c"></div>
<div class="a" style="left:605px;top:221px;width:163px;height:14px;background:#2a2a2a"></div>
<div class="a" style="left:617px;top:222px;width:23px;height:13px;background:#404040"></div>
<div class="a" style="left:609px;top:225px;width:0.8px;height:6px;background:#474747"></div>
<div class="a" style="left:611px;top:225px;width:0.8px;height:6px;background:#474747"></div>
<div class="t" style="left:618.8px;top:223px;font-size:6.45px;color:#e8e8e8">Layers</div>
<div class="t" style="left:643px;top:223px;font-size:6.45px;color:#d0d0d0">Effects</div>
<div class="t" style="left:668.5px;top:223px;font-size:6.45px;color:#d0d0d0">Styles</div>
<div class="t" style="left:691.4px;top:223px;font-size:6.45px;color:#d0d0d0">Text Styles</div>
<div class="t" style="left:727px;top:223px;font-size:6.45px;color:#d0d0d0">Stock</div>
<div class="a" style="left:757.3px;top:226px;width:4.6px;height:4.4px;background:#d8d8d8"></div>
<div class="a" style="left:763.2px;top:229.7px;width:1px;height:1px;background:#d8d8d8"></div>

<div class="a" style="left:605px;top:235px;width:163px;height:17px;background:#3c3c3c"></div>
<div class="t" style="left:610px;top:240px;font-size:6.6px;color:#d8d8d8">Opacity:</div>
<div class="a" style="left:634.4px;top:237.5px;width:44.3px;height:11px;background:#303030;border-radius:1px"></div>
<div class="t" style="left:637.5px;top:239px;font-size:6.9px;color:#e0e0e0">100 %</div>
<div class="a" style="left:673.8px;top:242.2px;width:0;height:0;border-left:2px solid transparent;border-right:2px solid transparent;border-top:2px solid #e8e8e8"></div>
<div class="a" style="left:682px;top:237.5px;width:56px;height:11px;background:#303030;border-radius:1px"></div>
<div class="t" style="left:684.5px;top:239px;font-size:6.9px;color:#e0e0e0">Normal</div>
<div class="a" style="left:731.3px;top:242.2px;width:0;height:0;border-left:2px solid transparent;border-right:2px solid transparent;border-top:2px solid #e8e8e8"></div>

<div class="a" style="left:605px;top:252px;width:163px;height:75px;background:#333333"></div>
<div class="a" style="left:605px;top:252px;width:152px;height:18px;background:#5e8fd1"></div>
<div class="a" style="left:618px;top:253px;width:17px;height:16.5px;background:#1b1b1b"></div>
<svg style="left:619px;top:256px" width="15.5" height="11" viewBox="0 0 15.5 11">
<rect width="15.5" height="11" fill="#86c0d2"/><rect width="15.5" height="1.8" fill="#e6eef3"/><rect y="1.6" width="15.5" height="1.6" fill="#5284ac"/>
<path d="M0 6.5 L6 11 H0 Z" fill="#c8c6c2"/><path d="M1.8 5 Q3 3.8 4.6 4.2 L5 9 L2.5 9.2 Z" fill="#2e5e9e"/><rect x="4.6" y="4" width="2" height="4.5" fill="#a8acb0"/><circle cx="5.6" cy="3.4" r="1" fill="#e8e8e8"/><path d="M4.5 8.5 H8 V10 H4.5 Z" fill="#b0b2b2"/>
</svg>
<div class="t" style="left:637.5px;top:257px;font-size:7px;font-weight:bold;color:#ffffff">Background</div>
<div class="t" style="left:680px;top:257px;font-size:7px;color:#c9dbf3">(Pixel)</div>
<div class="a" style="left:747px;top:257.8px;width:7px;height:7px;border:0.8px solid #a8bddc"></div>
<svg style="left:747px;top:257px" width="8" height="8" viewBox="0 0 8 8"><path d="M2 4.3 L3.5 6 L6.8 1" stroke="#c8d6ec" stroke-width="0.8" fill="none"/></svg>

<div class="a" style="left:605px;top:327px;width:163px;height:13px;background:#3d3d3d"></div>
<div class="a" style="left:608px;top:328px;width:12.6px;height:11px;background:#2a2a2a"></div>
<svg style="left:0;top:0" width="768" height="433" viewBox="0 0 768 433">
<path d="M610.5 331 L614.3 329.3 L618.1 331 L614.3 332.7 Z M610.5 333 L614.3 334.7 L618.1 333 M610.5 335 L614.3 336.7 L618.1 335" stroke="#bdbdbd" stroke-width="0.7" fill="#bdbdbd" fill-opacity="0.6"/>
<rect x="664" y="330.2" width="8.8" height="7" fill="#d0d0d0"/><circle cx="668.4" cy="333.7" r="2.2" fill="#3d3d3d"/>
<circle cx="681.3" cy="333.7" r="3.4" fill="none" stroke="#cfcfcf" stroke-width="0.8"/><path d="M681.3 330.3 A3.4 3.4 0 0 0 681.3 337.1 Z M682.5 330.5 L680 337" fill="#cfcfcf" stroke="#cfcfcf" stroke-width="0.6"/>
<text x="690.5" y="336.3" font-family="Liberation Serif" font-style="italic" font-size="9.5" fill="#bdbdbd">fx</text>
<path d="M729.5 329.8 H733 L735 331.8 V337.5 H729.5 Z M733 329.8 V331.8 H735" stroke="#cfcfcf" stroke-width="0.7" fill="none"/>
<rect x="742" y="330" width="6" height="7.5" fill="#cfcfcf"/>
<path d="M742 331.2 h1.2 v1.2 h-1.2z M744.4 331.2 h1.2 v1.2 h-1.2z M743.2 332.4 h1.2 v1.2 h-1.2z M745.6 332.4 h1.2 v1.2 h-1.2z M742 333.6 h1.2 v1.2 h-1.2z M744.4 333.6 h1.2 v1.2 h-1.2z M743.2 334.8 h1.2 v1.2 h-1.2z M745.6 334.8 h1.2 v1.2 h-1.2z M742 336 h1.2 v1.2 h-1.2z M744.4 336 h1.2 v1.2 h-1.2z" fill="#3d3d3d"/>
<path d="M755.8 330.5 H761.2 M757.5 329.7 H759.5" stroke="#bdbdbd" stroke-width="0.8"/><rect x="756.4" y="331.2" width="4.3" height="6.3" fill="#bdbdbd"/><path d="M757.7 332 V337 M759.4 332 V337" stroke="#3d3d3d" stroke-width="0.5"/>
<!-- gear, lock -->
<circle cx="745.1" cy="243.4" r="2.9" fill="#d0d0d0"/><circle cx="745.1" cy="243.4" r="1.2" fill="#3c3c3c"/>
<path d="M745.1 239.3 V247.5 M741 243.4 H749.2 M742.2 240.5 L748 246.3 M748 240.5 L742.2 246.3" stroke="#d0d0d0" stroke-width="1.2"/>
<circle cx="745.1" cy="243.4" r="1.1" fill="#3c3c3c"/>
<path d="M756.8 242.2 V240.6 Q758.3 238.3 759.8 240.6 V242.2" stroke="#c8c8c8" stroke-width="0.8" fill="none"/><rect x="755.9" y="242.2" width="4.8" height="4.6" fill="#c8c8c8"/>
</svg>

<div class="a" style="left:605px;top:340px;width:163px;height:15px;background:#2a2a2a"></div>
<div class="a" style="left:617px;top:341px;width:34.2px;height:14px;background:#404040"></div>
<div class="a" style="left:609px;top:345px;width:0.8px;height:6px;background:#474747"></div>
<div class="a" style="left:611px;top:345px;width:0.8px;height:6px;background:#474747"></div>
<div class="t" style="left:618.8px;top:344px;font-size:6.45px;color:#e8e8e8">Transform</div>
<div class="t" style="left:653.7px;top:344px;font-size:6.45px;color:#d0d0d0">History</div>
<div class="t" style="left:680.7px;top:344px;font-size:6.45px;color:#d0d0d0">Navigator</div>
<div class="a" style="left:605px;top:355px;width:163px;height:61.5px;background:#3e3e3e"></div>
<div class="a" style="left:620.6px;top:370px;width:17.4px;height:18.4px;background:#6b6b6b"></div>
<div class="a" style="left:617.5px;top:367.2px;width:5.6px;height:5.5px;background:#f4f4f4"></div>
<div class="a" style="left:627.75px;top:368px;width:3.3px;height:3.8px;background:#c9c9c9"></div>
<div class="a" style="left:636.90px;top:368px;width:3.3px;height:3.8px;background:#c9c9c9"></div>
<div class="a" style="left:618.60px;top:377.25px;width:3.3px;height:3.6px;background:#c9c9c9"></div>
<div class="a" style="left:627.75px;top:377.25px;width:3.3px;height:3.6px;background:#c9c9c9"></div>
<div class="a" style="left:636.90px;top:377.25px;width:3.3px;height:3.6px;background:#c9c9c9"></div>
<div class="a" style="left:618.60px;top:386.30px;width:3.3px;height:3.6px;background:#c9c9c9"></div>
<div class="a" style="left:627.75px;top:386.30px;width:3.3px;height:3.6px;background:#c9c9c9"></div>
<div class="a" style="left:636.90px;top:386.30px;width:3.3px;height:3.6px;background:#c9c9c9"></div>
<div class="t" style="left:652.2px;top:364.0px;font-size:7px;color:#d0d0d0">X:</div>
<div class="a" style="left:660.6px;top:362.5px;width:37.9px;height:11px;background:#303030;border-radius:1px"></div>
<div class="t" style="left:663.5px;top:364.0px;font-size:7px;color:#dcdcdc">360 px</div>
<div class="t" style="left:652.2px;top:378.5px;font-size:7px;color:#d0d0d0">Y:</div>
<div class="a" style="left:660.6px;top:377.0px;width:37.9px;height:11px;background:#303030;border-radius:1px"></div>
<div class="t" style="left:663.5px;top:378.5px;font-size:7px;color:#dcdcdc">240.1 px</div>
<div class="t" style="left:652.2px;top:396.1px;font-size:7px;color:#d0d0d0">R:</div>
<div class="a" style="left:660.6px;top:394.6px;width:37.9px;height:11px;background:#303030;border-radius:1px"></div>
<div class="t" style="left:663.5px;top:396.1px;font-size:7px;color:#dcdcdc">0 °</div>
<div class="a" style="left:692.5px;top:399.1px;width:0;height:0;border-left:2px solid transparent;border-right:2px solid transparent;border-top:2px solid #e8e8e8"></div>
<div class="t" style="left:705.5px;top:364.0px;font-size:7px;color:#d0d0d0">W:</div>
<div class="a" style="left:716.0px;top:362.5px;width:38.5px;height:11px;background:#303030;border-radius:1px"></div>
<div class="t" style="left:718.9px;top:364.0px;font-size:7px;color:#dcdcdc">640 px</div>
<div class="t" style="left:707.2px;top:378.5px;font-size:7px;color:#d0d0d0">H:</div>
<div class="a" style="left:716.0px;top:377.0px;width:38.5px;height:11px;background:#303030;border-radius:1px"></div>
<div class="t" style="left:718.9px;top:378.5px;font-size:7px;color:#dcdcdc">426.9 px</div>
<div class="t" style="left:708.2px;top:396.1px;font-size:7px;color:#d0d0d0">S:</div>
<div class="a" style="left:716.0px;top:394.6px;width:38.5px;height:11px;background:#303030;border-radius:1px"></div>
<div class="t" style="left:718.9px;top:396.1px;font-size:7px;color:#dcdcdc">0 °</div>
<div class="a" style="left:748.5px;top:399.1px;width:0;height:0;border-left:2px solid transparent;border-right:2px solid transparent;border-top:2px solid #e8e8e8"></div>
<svg style="left:757px;top:367px" width="6" height="16" viewBox="0 0 6 16"><path d="M1 1 H4 V15 H1 M4 5 H5.5 M4 11 H5.5" stroke="#bdbdbd" stroke-width="0.8" fill="none"/></svg>
<svg style="left:758px;top:424px" width="8" height="8" viewBox="0 0 8 8"><path d="M7 1 V7 H1 Z" fill="#4a4a4a"/></svg>

<div class="t" style="left:10.5px;top:422px;font-size:7.15px;color:#cdcdcd">&#8216;Background&#8217; selected. <b style="color:#fff">Drag</b> to move selection. <b style="color:#fff">Click</b> another object to select it. <b style="color:#fff">Click</b> on an empty area to deselect selection.</div>
<div class="a" style="left:596.7px;top:196.7px;width:4.6px;height:91.4px;border-radius:2.3px;background:#8b8b8b"></div>
<div class="a" style="left:224px;top:410px;width:169px;height:4.5px;border-radius:2.25px;background:#8b8b8b"></div>
<svg style="left:0;top:0" width="768" height="433" viewBox="0 0 768 433"><path d="M27.5 412 L31 410 V414 Z" fill="#6a6a6a"/><path d="M590 412 L586.5 410 V414 Z" fill="#8a8a8a"/><path d="M599 82.5 L601 86 H597 Z" fill="#8a8a8a"/><path d="M599 402.5 L601 399 H597 Z" fill="#8a8a8a"/></svg>
</body></html>
